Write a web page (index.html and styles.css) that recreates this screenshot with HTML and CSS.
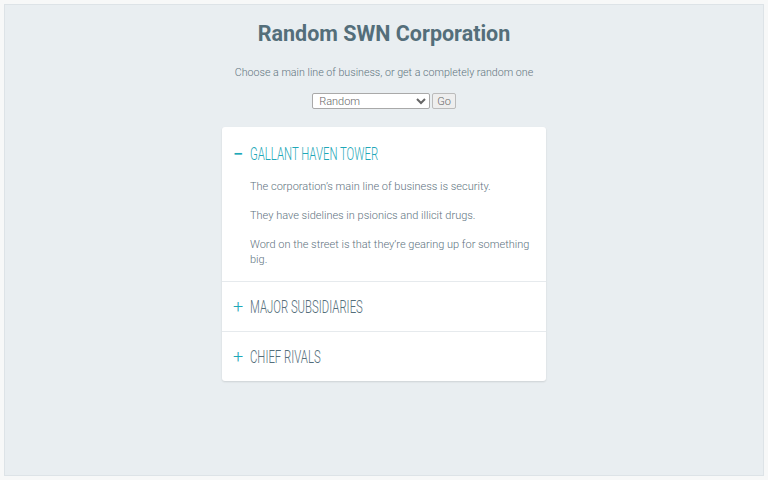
FILE: index.html
```html
<!DOCTYPE html>
<html>

<head>
    <title>Random SWN Corporation</title>
    <meta charset="utf-8">
    <meta name="viewport" content="width=device-width, initial-scale=1">
    <link rel="stylesheet" href="styles.css">
</head>

<body>
    <div class="page">
        <h1>Random SWN Corporation</h1>
        <p class="intro">Choose a main line of business, or get a completely random one</p>

        <form class="picker">
            <select class="business">
                <option>Random</option>
                <option>Security</option>
                <option>Psionics</option>
                <option>Shipping</option>
            </select>
            <button type="button" class="go">Go</button>
        </form>

        <ul class="accordion">
            <li class="section open">
                <div class="section-head"><span class="sign">&minus;</span><span class="label">Gallant Haven Tower</span></div>
                <div class="section-body">
                    <p>The corporation’s main line of business is security.</p>
                    <p>They have sidelines in psionics and illicit drugs.</p>
                    <p>Word on the street is that they’re gearing up for something big.</p>
                </div>
            </li>
            <li class="section">
                <div class="section-head"><span class="sign">+</span><span class="label">Major Subsidiaries</span></div>
            </li>
            <li class="section">
                <div class="section-head"><span class="sign">+</span><span class="label">Chief Rivals</span></div>
            </li>
        </ul>
    </div>
</body>

</html>
```

FILE: styles.css
```css
body {
    background-color: #f7f8f8;
    margin: 0;
    padding: 4px;
    height: 480px;
    box-sizing: border-box;
    font-family: Roboto, "Liberation Sans", sans-serif;
}

.page {
    background-color: #e9eef1;
    border: 1px solid #dde3e7;
    height: 100%;
    box-sizing: border-box;
    padding-top: 16px;
    text-align: center;
}

h1 {
    color: #546e7a;
    font-size: 21.5px;
    font-weight: bold;
    margin: 0;
    line-height: 26px;
}

.intro {
    color: #5f7480;
    font-size: 10.7px;
    font-weight: 300;
    margin: 19px 0 0;
    line-height: 14px;
}

.picker {
    margin-top: 13px;
    display: flex;
    justify-content: center;
    gap: 2px;
}

.business {
    width: 118px;
    height: 16px;
    font-family: Roboto, sans-serif;
    font-weight: 300;
    font-size: 11px;
    color: #666;
    border: 1px solid #a9a9a9;
    border-radius: 2px;
    background: white;
    padding: 0 0 0 2px;
}

.go {
    height: 16px;
    font-family: Roboto, sans-serif;
    font-weight: 300;
    font-size: 11px;
    color: #666;
    border: 1px solid #bbb;
    border-radius: 2px;
    background: #eee;
    padding: 0 4px;
}

.accordion {
    list-style: none;
    width: 324px;
    margin: 18px auto 0;
    padding: 0;
    background: white;
    border-radius: 3px;
    box-shadow: 0 1px 2px rgba(0, 0, 0, 0.12);
    text-align: left;
}

.section {
    border-top: 1px solid #e6eaed;
}

.section:first-child {
    border-top: none;
}

.section-head {
    display: flex;
    align-items: center;
    height: 49px;
    padding-left: 11px;
    color: #546e7a;
}

.open .section-head {
    color: #1fa8b8;
    height: 52px;
}

.sign {
    width: 17px;
    color: #1fa8b8;
    font-size: 18px;
    font-weight: 300;
}

.open .sign {
    font-weight: 500;
}

.label {
    display: inline-block;
    font-family: "Roboto", sans-serif;
    font-weight: 300;
    font-size: 18px;
    text-transform: uppercase;
    transform: scaleX(0.63);
    transform-origin: left center;
    white-space: nowrap;
}

.section-body {
    padding: 0 14px 14px 28px;
    color: #607380;
    font-size: 11px;
    font-weight: 300;
    line-height: 15px;
}

.section-body p {
    margin: 0 0 14px;
}

.section-body p:last-child {
    margin-bottom: 0;
}
```
